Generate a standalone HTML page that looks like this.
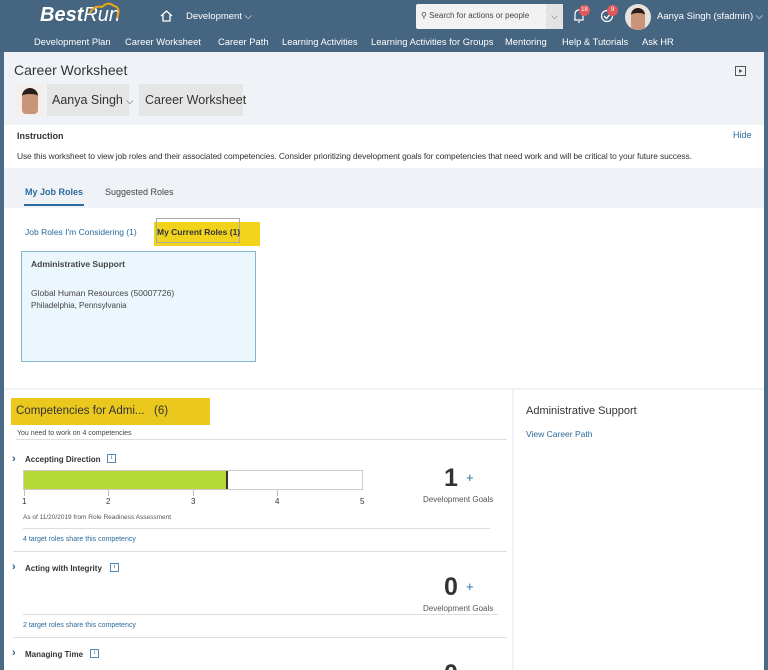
<!DOCTYPE html>
<html style="width:768px;height:670px;overflow:hidden"><head><style>
*{box-sizing:border-box;margin:0;padding:0}
body{width:768px;height:670px;overflow:hidden;font-family:"Liberation Sans",sans-serif;background:#4a6a85;position:relative;color:#333}
.a{position:absolute}
.hdr{left:0;top:0;width:768px;height:52px;background:#466580}
.nav{top:36px;font-size:9.4px;color:#fff;white-space:nowrap}
.blue{color:#2a6a9c}
.t{white-space:nowrap}
.bar{background:#e5e5e5}
.chev{font-size:11px;font-weight:bold;color:#2a5a8c}
</style></head><body>
<div class="a hdr"></div>
<div class="a t" style="left:40px;top:4px;font-size:20px;color:#fff;font-weight:bold;font-style:italic">Best<span style="font-weight:normal">Run</span></div>
<svg class="a" style="left:88px;top:1px" width="34" height="22"><path d="M2 12 Q6 4 14 6 Q20 0 26 5 Q33 6 29 17" stroke="#e8a317" stroke-width="2" fill="none"/></svg>
<svg class="a" style="left:160px;top:10px" width="13" height="12"><path d="M1 6 L6.5 1 L12 6 M3 5 V11 H10 V5" stroke="#fff" stroke-width="1.3" fill="none"/></svg>
<div class="a t" style="left:186px;top:11px;font-size:9.5px;color:#fff">Development ⌵</div>
<div class="a" style="left:416px;top:4px;width:147px;height:25px;background:#f2f2f2;border-radius:2px"></div>
<div class="a" style="left:546px;top:4px;width:17px;height:25px;background:#e3e3e3;font-size:9px;color:#555;text-align:center;line-height:25px">⌵</div>
<div class="a t" style="left:421px;top:11px;font-size:8px;color:#444">⚲ Search for actions or people</div>
<svg class="a" style="left:572px;top:8px" width="14" height="16"><path d="M3 12 V7 Q3 2 7 2 Q11 2 11 7 V12 H2 M6 14 H8" stroke="#fff" stroke-width="1.2" fill="none"/></svg>
<div class="a" style="left:579px;top:5px;width:11px;height:11px;border-radius:50%;background:#e0585b;color:#fff;font-size:6px;text-align:center;line-height:11px">18</div>
<svg class="a" style="left:600px;top:9px" width="14" height="14"><circle cx="7" cy="7" r="5.5" stroke="#fff" stroke-width="1.2" fill="none"/><path d="M4 7 L6.5 9.5 L11 4" stroke="#fff" stroke-width="1.3" fill="none"/></svg>
<div class="a" style="left:607px;top:5px;width:11px;height:11px;border-radius:50%;background:#e0585b;color:#fff;font-size:6px;text-align:center;line-height:11px">9</div>
<div class="a" style="left:625px;top:4px;width:26px;height:26px;border-radius:50%;background:#e8e2dc;overflow:hidden"><div style="margin:4px auto;width:14px;height:22px;border-radius:7px 7px 4px 4px;background:#c9957a;border-top:5px solid #2a1c16"></div></div>
<div class="a t" style="left:657px;top:11px;font-size:9.5px;color:#fff">Aanya Singh (sfadmin) ⌵</div>
<div class="a nav" style="left:34px">Development Plan</div>
<div class="a nav" style="left:125px">Career Worksheet</div>
<div class="a nav" style="left:218px">Career Path</div>
<div class="a nav" style="left:282px">Learning Activities</div>
<div class="a nav" style="left:371px">Learning Activities for Groups</div>
<div class="a nav" style="left:505px">Mentoring</div>
<div class="a nav" style="left:562px">Help &amp; Tutorials</div>
<div class="a nav" style="left:642px">Ask HR</div>

<div class="a" style="left:4px;top:52px;width:760px;height:618px;background:#eff3f7"></div>
<div class="a t" style="left:14px;top:62px;font-size:14px;color:#333">Career Worksheet</div>
<svg class="a" style="left:735px;top:66px" width="12" height="11"><rect x="0.5" y="0.5" width="10" height="9" fill="none" stroke="#555"/><path d="M4 3 L7.5 5 L4 7Z" fill="#555"/></svg>
<div class="a" style="left:15px;top:84px;width:30px;height:32px;background:#f3f0ec;overflow:hidden"><div style="margin:4px auto 0;width:16px;height:26px;border-radius:8px 8px 4px 4px;background:#c9957a;border-top:6px solid #2a1c16"></div></div>
<div class="a bar" style="left:47px;top:84px;width:82px;height:32px"></div>
<div class="a t" style="left:52px;top:93px;font-size:12.5px;color:#333">Aanya Singh <span style="font-size:9px">⌵</span></div>
<div class="a bar" style="left:139px;top:84px;width:104px;height:32px"></div>
<div class="a t" style="left:145px;top:93px;font-size:12.5px;color:#333">Career Worksheet</div>

<div class="a" style="left:4px;top:125px;width:760px;height:43px;background:#fff"></div>
<div class="a t" style="left:17px;top:131px;font-size:9px;font-weight:bold">Instruction</div>
<div class="a t blue" style="left:733px;top:130px;font-size:9px">Hide</div>
<div class="a t" style="left:17px;top:151px;font-size:8.4px;letter-spacing:-0.1px">Use this worksheet to view job roles and their associated competencies. Consider prioritizing development goals for competencies that need work and will be critical to your future success.</div>
<div class="a t blue" style="left:25px;top:187px;font-size:9px;font-weight:bold">My Job Roles</div>
<div class="a" style="left:24px;top:204px;width:60px;height:2px;background:#2a6a9c"></div>
<div class="a t" style="left:105px;top:187px;font-size:9px;color:#444">Suggested Roles</div>
<div class="a" style="left:4px;top:208px;width:760px;height:180px;background:#fff"></div>
<div class="a t blue" style="left:25px;top:227px;font-size:8.5px">Job Roles I'm Considering (1)</div>
<div class="a" style="left:154px;top:222px;width:106px;height:24px;background:#f1d31b"></div>
<div class="a" style="left:156px;top:218px;width:84px;height:25px;border:1px solid #aaa"></div>
<div class="a t" style="left:157px;top:227px;font-size:8.5px;font-weight:bold">My Current Roles (1)</div>
<div class="a" style="left:21px;top:251px;width:235px;height:111px;background:#ebf6fd;border:1px solid #86b5cf"></div>
<div class="a t" style="left:31px;top:259px;font-size:8.5px;font-weight:bold;color:#444">Administrative Support</div>
<div class="a t" style="left:31px;top:288px;font-size:8.5px;color:#444">Global Human Resources (50007726)</div>
<div class="a t" style="left:31px;top:301px;font-size:8px;color:#444">Philadelphia, Pennsylvania</div>

<div class="a" style="left:4px;top:390px;width:508px;height:280px;background:#fff"></div>
<div class="a" style="left:514px;top:390px;width:250px;height:280px;background:#fff"></div>
<div class="a" style="left:11px;top:398px;width:199px;height:27px;background:#eac81e"></div>
<div class="a t" style="left:16px;top:405px;font-size:11.5px;color:#333">Competencies for Admi... &nbsp;&nbsp;(6)</div>
<div class="a t" style="left:17px;top:430px;font-size:7px;color:#444">You need to work on 4 competencies</div>
<div class="a" style="left:16px;top:439px;width:491px;height:1px;background:#ddd"></div>
<div class="a t chev" style="left:12px;top:453px">›</div>
<div class="a t" style="left:25px;top:455px;font-size:8px;font-weight:bold">Accepting Direction</div>
<div class="a" style="left:107px;top:454px;width:9px;height:9px;border:1px solid #5a8ab0;font-size:6px;color:#2a6a9c;text-align:center;line-height:7px">i</div>
<div class="a" style="left:23px;top:470px;width:340px;height:20px;border:1px solid #ccc;background:#fff"></div>
<div class="a" style="left:24px;top:471px;width:203px;height:18px;background:#b4d936"></div>
<div class="a" style="left:226px;top:471px;width:2px;height:18px;background:#333"></div>
<div class="a" style="left:24px;top:490px;width:1px;height:6px;background:#bbb"></div>
<div class="a" style="left:108px;top:490px;width:1px;height:6px;background:#bbb"></div>
<div class="a" style="left:193px;top:490px;width:1px;height:6px;background:#bbb"></div>
<div class="a" style="left:277px;top:490px;width:1px;height:6px;background:#bbb"></div>
<div class="a t" style="left:22px;top:497px;font-size:8px">1</div>
<div class="a t" style="left:106px;top:497px;font-size:8px">2</div>
<div class="a t" style="left:191px;top:497px;font-size:8px">3</div>
<div class="a t" style="left:275px;top:497px;font-size:8px">4</div>
<div class="a t" style="left:360px;top:497px;font-size:8px">5</div>
<div class="a t" style="left:23px;top:514px;font-size:6.5px;color:#555">As of 11/20/2019 from Role Readiness Assessment</div>
<div class="a" style="left:23px;top:528px;width:467px;height:1px;background:#ddd"></div>
<div class="a t blue" style="left:23px;top:536px;font-size:7px">4 target roles share this competency</div>
<div class="a" style="left:13px;top:551px;width:494px;height:1px;background:#ddd"></div>
<div class="a t" style="left:444px;top:464px;font-size:25px;font-weight:bold;color:#333">1</div>
<div class="a t blue" style="left:466px;top:470px;font-size:13px">+</div>
<div class="a t" style="left:423px;top:495px;font-size:8px;color:#555">Development Goals</div>

<div class="a t chev" style="left:12px;top:561px">›</div>
<div class="a t" style="left:25px;top:564px;font-size:8px;font-weight:bold">Acting with Integrity</div>
<div class="a" style="left:110px;top:563px;width:9px;height:9px;border:1px solid #5a8ab0;font-size:6px;color:#2a6a9c;text-align:center;line-height:7px">i</div>
<div class="a t" style="left:444px;top:573px;font-size:25px;font-weight:bold;color:#333">0</div>
<div class="a t blue" style="left:466px;top:579px;font-size:13px">+</div>
<div class="a t" style="left:423px;top:604px;font-size:8px;color:#555">Development Goals</div>
<div class="a" style="left:23px;top:614px;width:475px;height:1px;background:#ddd"></div>
<div class="a t blue" style="left:23px;top:622px;font-size:7px">2 target roles share this competency</div>
<div class="a" style="left:13px;top:637px;width:494px;height:1px;background:#ddd"></div>
<div class="a t chev" style="left:12px;top:647px">›</div>
<div class="a t" style="left:25px;top:650px;font-size:8px;font-weight:bold">Managing Time</div>
<div class="a" style="left:90px;top:649px;width:9px;height:9px;border:1px solid #5a8ab0;font-size:6px;color:#2a6a9c;text-align:center;line-height:7px">i</div>
<div class="a" style="left:440px;top:660px;width:30px;height:10px;overflow:hidden"><div style="font-size:25px;font-weight:bold;color:#333;margin-left:4px;line-height:28px">0</div></div>

<div class="a t" style="left:526px;top:405px;font-size:11px;color:#333">Administrative Support</div>
<div class="a t blue" style="left:526px;top:429px;font-size:8.5px">View Career Path</div>
</body></html>
